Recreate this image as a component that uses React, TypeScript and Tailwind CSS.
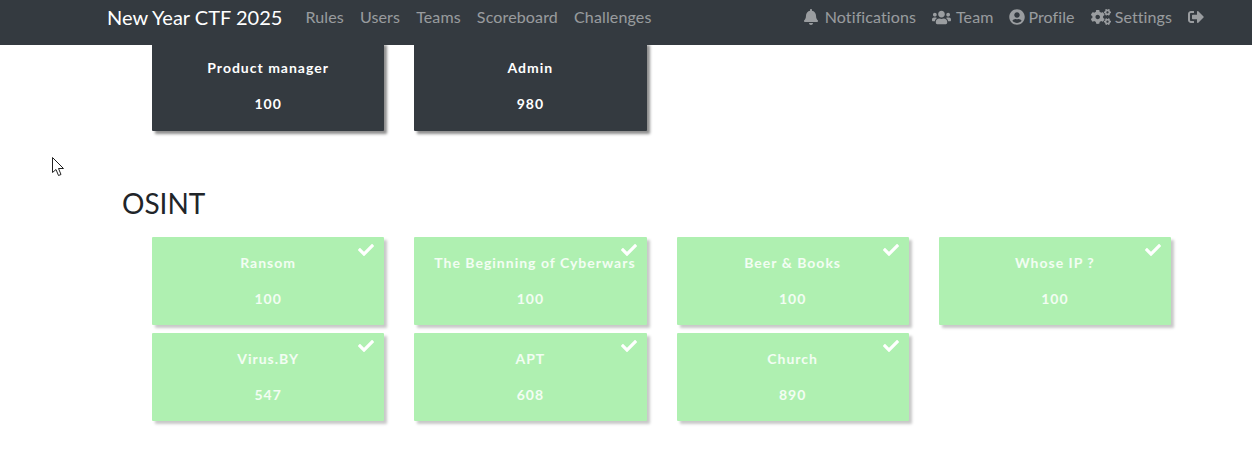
import { FaBell, FaUsers, FaUserCircle, FaCogs, FaSignOutAlt, FaCheck } from 'react-icons/fa'

const links = ['Rules', 'Users', 'Teams', 'Scoreboard', 'Challenges']

const osint = [
  { name: 'Ransom', score: 100 },
  { name: 'The Beginning of Cyberwars', score: 100 },
  { name: 'Beer & Books', score: 100 },
  { name: 'Whose IP ?', score: 100 },
  { name: 'Virus.BY', score: 547 },
  { name: 'APT', score: 608 },
  { name: 'Church', score: 890 },
]

const Card = ({ name, score, solved }: { name: string; score: number; solved?: boolean }) => (
  <div className="px-[15px] pb-2">
    <div
      className={`relative rounded-[1px] px-5 pt-[15px] text-center font-bold text-[14px] tracking-[1px] ${
        solved
          ? 'h-[88px] bg-[#aff0b1] text-white/85 shadow-[3px_3px_3px_rgba(0,0,0,0.22)]'
          : 'h-[89px] bg-[#343a40] text-white shadow-[3px_3px_3px_rgba(0,0,0,0.45)]'
      }`}
    >
      {solved && <FaCheck size={16} className="absolute right-[10px] top-[5px] text-white" />}
      <div className="leading-[22px] whitespace-nowrap">{name}</div>
      <div className="mt-[14px] leading-[22px]">{score}</div>
    </div>
  </div>
)

const App = () => {
  return (
    <div className="relative h-[459px] overflow-hidden bg-white font-['Lato','Liberation_Sans',sans-serif] text-[#212529]">
      <nav className="relative z-10 flex h-[45px] items-center justify-between bg-[#343a40] pb-[11px] pl-[107px] pr-[40px] text-[16px] tracking-[0.1px] text-white/50">
        <div className="flex items-center tracking-[0.15px]">
          <span className="mr-[15px] text-[20px] tracking-normal text-white">New Year CTF 2025</span>
          {links.map((l) => (
            <span key={l} className="px-2">{l}</span>
          ))}
        </div>
        <div className="flex items-center">
          <span className="flex items-center gap-[6px] px-2"><FaBell size={16} />Notifications</span>
          <span className="flex items-center gap-[5px] px-2"><FaUsers size={19} />Team</span>
          <span className="flex items-center gap-[3px] px-2"><FaUserCircle size={16} />Profile</span>
          <span className="flex items-center gap-[4px] px-2"><FaCogs size={20} />Settings</span>
          <span className="flex items-center px-2"><FaSignOutAlt size={16} /></span>
        </div>
      </nav>

      <main className="mt-[-3px] w-[1080px] ml-[122px]">
        <div className="ml-[15px] grid w-[1049px] grid-cols-4">
          <Card name="Product manager" score={100} />
          <Card name="Admin" score={980} />
        </div>
        <h2 className="mt-[46px] mb-[16px] text-[28px] leading-[36px] font-normal">OSINT</h2>
        <div className="ml-[15px] grid w-[1049px] grid-cols-4">
          {osint.map((c) => (
            <Card key={c.name} name={c.name} score={c.score} solved />
          ))}
        </div>
      </main>

      {/* mouse pointer from the capture */}
      <svg className="absolute left-[52px] top-[157px]" width="13" height="20" viewBox="0 0 13 20">
        <path d="M0.5 0.5 L0.5 15.5 L4 12.5 L6.5 18.5 L9 17.5 L6.5 11.5 L11.5 11.5 Z" fill="#fff" stroke="#222" strokeWidth="1" />
      </svg>
    </div>
  )
}

export default App
